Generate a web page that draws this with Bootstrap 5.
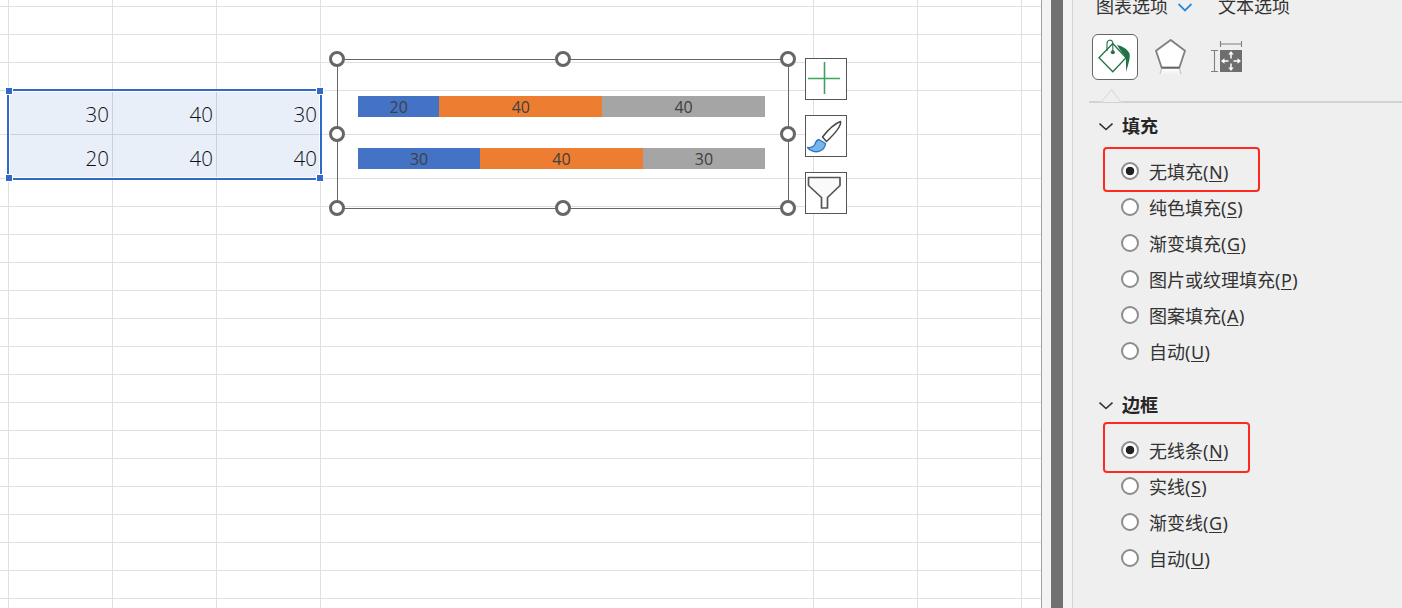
<!DOCTYPE html>
<html lang="zh-CN">
<head>
<meta charset="utf-8">
<title>设置图表区格式</title>
<link href="https://cdn.jsdelivr.net/npm/bootstrap@5.3.0/dist/css/bootstrap.min.css" rel="stylesheet">
<style>
html,body{height:608px;overflow:hidden;background:#fff;}
body{font-family:"Noto Sans","Noto Sans CJK SC",sans-serif;color:#333;}
.app-shell{width:1402px;height:608px;}
/* sheet */
.sheet{width:1042px;height:608px;flex:none;border-right:1px solid #a3a3a3;box-sizing:border-box;
  background-color:#fff;background-repeat:no-repeat;
  background-image:linear-gradient(#e0e0e0,#e0e0e0),linear-gradient(#e0e0e0,#e0e0e0),linear-gradient(#e0e0e0,#e0e0e0),linear-gradient(#e0e0e0,#e0e0e0),linear-gradient(#e0e0e0,#e0e0e0),linear-gradient(#e0e0e0,#e0e0e0),linear-gradient(#e0e0e0,#e0e0e0);
  background-size:1px 100%;
  background-position:8px 0,112px 0,216px 0,320px 0,813px 0,917px 0,1021px 0;}
.srow{height:28px;border-bottom:1px solid #e0e0e0;}
.srow-first{height:7px;}
.srow-data{height:44px;padding-left:9px;}
.srow-end{height:10px;border-bottom:0;}
.scell{width:104px;height:44px;margin-bottom:-1px;flex:none;background:#e8eff9;border-right:1px solid #c9d1dd;border-bottom:1px solid #c9d1dd;
  font-family:"Open Sans",sans-serif;font-weight:300;font-size:20.5px;color:#0f0f0f;text-align:right;padding-right:3px;line-height:47px;}
.sel-range{left:7px;top:89px;width:315px;height:91px;border:2px solid #3069c8;box-shadow:inset 0 0 0 1px #fff;}
.sel-dot{width:6px;height:6px;background:#3069c8;box-shadow:0 0 0 1px #fff;}
.chart-frame{left:337px;top:59px;width:452px;height:150px;border:1px solid #666;padding:36px 0 0 20px;}
.bars{width:407px;gap:31px;}
.bar-line{height:21px;}
.seg{font-family:"Open Sans",sans-serif;font-size:16px;line-height:23px;color:#404040;text-align:center;}
.seg-a{background:#4472c4;}
.seg-b{background:#ed7d31;}
.seg-c{background:#a5a5a5;}
.grip-layer{left:-1px;top:-1px;right:0;bottom:0;}
.grip{width:16px;height:16px;border:3px solid #666;border-radius:50%;background:#fff;}
.chart-tools{left:805px;top:58px;gap:15px;}
.tool-box{width:42px;height:42px;border:1px solid #555;background:#fff;padding:0;}
.tool-box svg{display:block;margin:-1px;}
/* divider */
.gutter{width:9px;flex:none;background:#f3f3f3;}
.gutter-bar{width:12px;flex:none;background:#717171;}
/* panel */
.pane{flex:1 1 auto;background:#efefef;border-left:1px solid #d4d4d4;height:608px;overflow:hidden;font-size:18px;line-height:24px;}
.pane-tabs{margin-top:-6px;padding-left:23px;height:24px;}
.pane-tabs .caret-tab{margin:0 26px 0 10px;}
.icon-strip{margin-top:16px;padding-left:19px;height:46px;}
.icon-on{width:46px;height:46px;border:1px solid #666;border-radius:6px;background:#fff;}
.icon-on svg{display:block;margin:-1px;}
.icon-gap-a{margin-left:13px;}
.icon-gap-b{margin-left:17px;margin-top:4px;}
.tab-rule{margin:21px 0 0 16px;height:2px;background:#d2d2d2;}
.tab-notch{left:11px;top:-13px;}
.sec-head{padding-left:26px;height:24px;font-weight:700;color:#262626;gap:9px;}
.sec-one{margin-top:11px;margin-bottom:15px;}
.sec-two{margin-top:24px;margin-bottom:15px;}
.opt{height:36px;padding-left:48px;gap:10px;color:#333;}
.opt>span{margin-top:2px;}
.opt .form-check-input{width:18px;height:18px;margin:0;flex:none;float:none;border:2px solid #8c8c8c;background-color:#fff;background-image:none;}
.opt .form-check-input:checked[type=radio]{background-color:#fff;border-color:#8c8c8c;background-image:radial-gradient(circle,#222 0,#222 4px,#fff 4.6px);}
.red-a,.red-b{border:2px solid #ff2a1f;border-radius:4px;left:30px;pointer-events:none;}
.red-a{top:-6px;width:157px;height:45px;}
.red-b{top:-10px;width:147px;height:51px;}
.opt u{text-underline-offset:2px;padding:0 .5px;}
</style>
</head>
<body>
<div class="app-shell d-flex">
  <div class="sheet position-relative">
    <div class="srow srow-first"></div>
    <div class="srow"></div>
    <div class="srow"></div>
    <div class="srow"></div>
    <div class="srow srow-data d-flex">
      <div class="scell">30</div><div class="scell">40</div><div class="scell">30</div>
    </div>
    <div class="srow srow-data d-flex">
      <div class="scell">20</div><div class="scell">40</div><div class="scell">40</div>
    </div>
    <div class="srow"></div><div class="srow"></div><div class="srow"></div><div class="srow"></div><div class="srow"></div>
    <div class="srow"></div><div class="srow"></div><div class="srow"></div><div class="srow"></div><div class="srow"></div>
    <div class="srow"></div><div class="srow"></div><div class="srow"></div><div class="srow"></div><div class="srow"></div>
    <div class="srow srow-end"></div>

    <div class="sel-range position-absolute">
      <span class="sel-dot position-absolute top-0 start-0 translate-middle"></span>
      <span class="sel-dot position-absolute top-0 start-100 translate-middle"></span>
      <span class="sel-dot position-absolute top-100 start-0 translate-middle"></span>
      <span class="sel-dot position-absolute top-100 start-100 translate-middle"></span>
    </div>

    <div class="chart-frame position-absolute">
      <div class="bars d-flex flex-column">
        <div class="bar-line d-flex">
          <div class="seg seg-a" style="width:20%">20</div>
          <div class="seg seg-b" style="width:40%">40</div>
          <div class="seg seg-c" style="width:40%">40</div>
        </div>
        <div class="bar-line d-flex">
          <div class="seg seg-a" style="width:30%">30</div>
          <div class="seg seg-b" style="width:40%">40</div>
          <div class="seg seg-c" style="width:30%">30</div>
        </div>
      </div>
      <div class="grip-layer position-absolute">
        <span class="grip position-absolute top-0 start-0 translate-middle"></span>
        <span class="grip position-absolute top-0 start-50 translate-middle"></span>
        <span class="grip position-absolute top-0 start-100 translate-middle"></span>
        <span class="grip position-absolute top-50 start-0 translate-middle"></span>
        <span class="grip position-absolute top-50 start-100 translate-middle"></span>
        <span class="grip position-absolute top-100 start-0 translate-middle"></span>
        <span class="grip position-absolute top-100 start-50 translate-middle"></span>
        <span class="grip position-absolute top-100 start-100 translate-middle"></span>
      </div>
    </div>

    <div class="chart-tools position-absolute d-flex flex-column">
      <div class="tool-box">
        <svg width="42" height="42" viewBox="0 0 42 42"><path d="M3 20.500H35M19.500 4V36" stroke="#3fa35c" stroke-width="1.6" fill="none"/></svg>
      </div>
      <div class="tool-box">
        <svg width="42" height="42" viewBox="0 0 42 42">
          <path d="M17.500 22C23 15 30 8.500 35.500 6.500C36.500 10.500 30 18.500 21.500 26.500Z" fill="#fff" stroke="#454545" stroke-width="1.5" stroke-linejoin="round"/>
          <path d="M14 24.500C11 25 10.500 28 9.500 30C8.500 32 5 33 2.500 32.500C5 36 10 37.500 14 36.300C18 35 20.300 32 20.500 28.500Z" fill="#7ab5ea" stroke="#2e75c6" stroke-width="1.3" stroke-linejoin="round"/>
        </svg>
      </div>
      <div class="tool-box">
        <svg width="42" height="42" viewBox="0 0 42 42"><path d="M3.500 5.500H35V13.500L22.500 25.500V36H16.500V25.500L3.500 13.500Z" fill="#fafafa" stroke="#555" stroke-width="1.7" stroke-linejoin="round"/></svg>
      </div>
    </div>
  </div>

  <div class="gutter"></div>
  <div class="gutter-bar"></div>
  <div class="gutter"></div>

  <div class="pane">
    <div class="pane-tabs d-flex align-items-center">
      <span>图表选项</span>
      <svg class="caret-tab" width="14" height="24" viewBox="0 0 14 24"><path d="M.5 10L7 16.500L13.500 10" fill="none" stroke="#2b88d8" stroke-width="1.8"/></svg>
      <span>文本选项</span>
    </div>

    <div class="icon-strip d-flex align-items-start">
      <div class="icon-on">
        <svg width="46" height="46" viewBox="0 0 46 46">
          <path d="M7 23.700L20.800 9.500L34 23.700L20.800 37.700Z" fill="none" stroke="#217346" stroke-width="1.3"/>
          <path d="M15 17V9.500C15 5.500 20 5 20.800 8.500V18" fill="none" stroke="#217346" stroke-width="1.1"/>
          <circle cx="20.800" cy="18.300" r="2" fill="#217346"/>
          <path d="M25 11C30 12 35.500 15 37.500 19.500C38.500 24 36.200 30 34.300 38C33.800 32 34.300 27 33.500 23L28.500 16.500Z" fill="#217346"/>
        </svg>
      </div>
      <svg class="icon-gap-a" width="40" height="46" viewBox="0 0 40 46">
        <defs><linearGradient id="penShade" x1="0" y1="0" x2="0" y2="1"><stop offset="0" stop-color="#fff"/><stop offset="1" stop-color="#efefef"/></linearGradient></defs>
        <path d="M10.500 34H28.500L30 41H9Z" fill="url(#penShade)"/>
        <path d="M10.700 34L9 40M28.300 34L30 40" stroke="#c8c8c8" stroke-width="1.2" fill="none"/>
        <path d="M19.700 6L34 16.700L28.300 33.700H10.700L5 16.700Z" fill="#fff" stroke="#7f7f7f" stroke-width="1.8" stroke-linejoin="round"/>
        <path d="M10.700 33.700H28.300" stroke="#666" stroke-width="1.8"/>
      </svg>
      <svg class="icon-gap-b" width="36" height="36" viewBox="0 0 36 36">
        <path d="M12.500 3V9M33.500 3V9M12.500 6H33.500M3 12.500H10M3 33.500H10M6.500 12.500V33.500" stroke="#7f7f7f" stroke-width="1.1" fill="none"/>
        <rect x="12" y="12" width="22" height="22" fill="#6e6e6e"/>
        <path d="M23 15V20.500M23 25.500V31M15 23H20.500M25.500 23H31" stroke="#fff" stroke-width="1.5"/>
        <path d="M23 13L25.700 16.500H20.300ZM23 33L20.300 29.500H25.700ZM13 23L16.500 20.300V25.700ZM33 23L29.500 25.700V20.300Z" fill="#fff"/>
      </svg>
    </div>

    <div class="tab-rule position-relative">
      <svg class="tab-notch position-absolute" width="24" height="16" viewBox="0 0 24 16"><path d="M2 14L11.500 2L21 14Z" fill="#efefef"/><path d="M0 14.500L1.500 14L11.500 1.500L21 14L24 14.500" fill="none" stroke="#dcdcdc" stroke-width="1.2"/></svg>
    </div>

    <div class="sec-head sec-one d-flex align-items-center">
      <svg width="14" height="24" viewBox="0 0 14 24"><path d="M.5 9.500L7 15.500L13.500 9.500" fill="none" stroke="#333" stroke-width="1.6"/></svg>
      <span>填充</span>
    </div>
    <div class="opt d-flex align-items-center position-relative">
      <input class="form-check-input" type="radio" name="fill" checked><span>无填充(<u>N</u>)</span>
      <div class="red-a position-absolute"></div>
    </div>
    <div class="opt d-flex align-items-center"><input class="form-check-input" type="radio" name="fill"><span>纯色填充(<u>S</u>)</span></div>
    <div class="opt d-flex align-items-center"><input class="form-check-input" type="radio" name="fill"><span>渐变填充(<u>G</u>)</span></div>
    <div class="opt d-flex align-items-center"><input class="form-check-input" type="radio" name="fill"><span>图片或纹理填充(<u>P</u>)</span></div>
    <div class="opt d-flex align-items-center"><input class="form-check-input" type="radio" name="fill"><span>图案填充(<u>A</u>)</span></div>
    <div class="opt d-flex align-items-center"><input class="form-check-input" type="radio" name="fill"><span>自动(<u>U</u>)</span></div>

    <div class="sec-head sec-two d-flex align-items-center">
      <svg width="14" height="24" viewBox="0 0 14 24"><path d="M.5 9.500L7 15.500L13.500 9.500" fill="none" stroke="#333" stroke-width="1.6"/></svg>
      <span>边框</span>
    </div>
    <div class="opt d-flex align-items-center position-relative">
      <input class="form-check-input" type="radio" name="line" checked><span>无线条(<u>N</u>)</span>
      <div class="red-b position-absolute"></div>
    </div>
    <div class="opt d-flex align-items-center"><input class="form-check-input" type="radio" name="line"><span>实线(<u>S</u>)</span></div>
    <div class="opt d-flex align-items-center"><input class="form-check-input" type="radio" name="line"><span>渐变线(<u>G</u>)</span></div>
    <div class="opt d-flex align-items-center"><input class="form-check-input" type="radio" name="line"><span>自动(<u>U</u>)</span></div>
  </div>
</div>
<script src="https://cdn.jsdelivr.net/npm/bootstrap@5.3.0/dist/js/bootstrap.bundle.min.js"></script>
</body>
</html>
